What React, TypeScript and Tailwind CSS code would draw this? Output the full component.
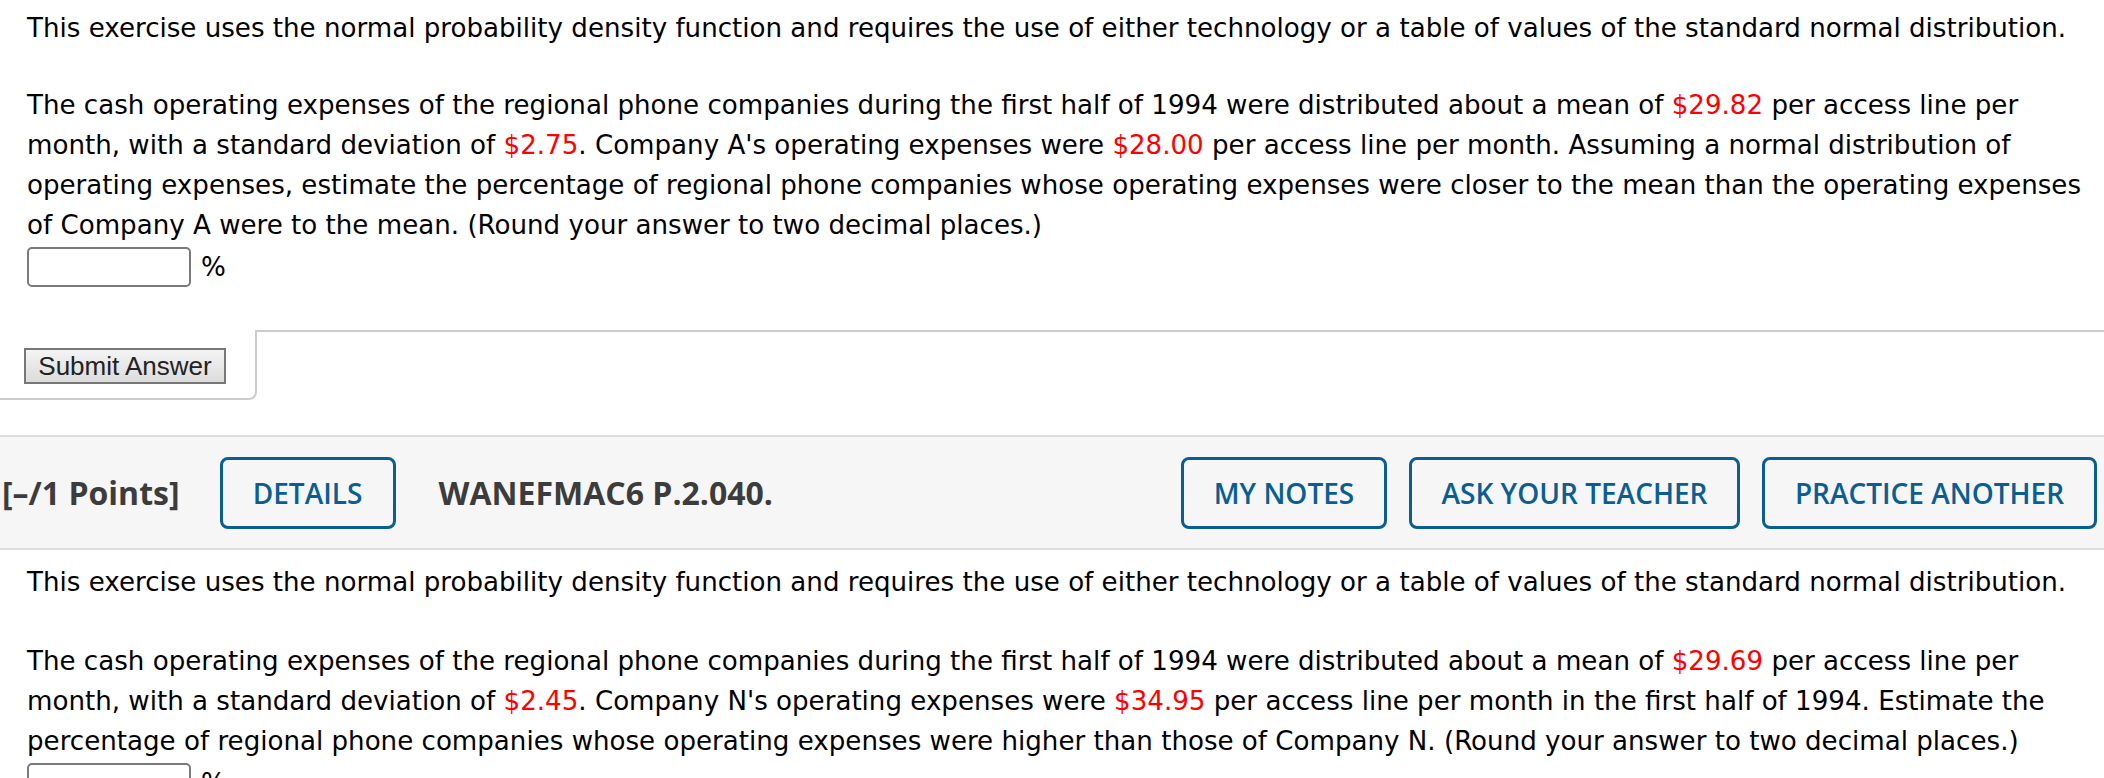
const body = { fontFamily: '"DejaVu Sans", Verdana, sans-serif' }
const head = { fontFamily: '"Open Sans", "Noto Sans", sans-serif' }
const arial = { fontFamily: '"Liberation Sans", Arial, sans-serif' }

function Red({ children }: { children: React.ReactNode }) {
  return <span className="text-[#ff0000]">{children}</span>
}

function AnswerRow() {
  return (
    <div className="mt-[2px] flex items-center gap-[10px]">
      <input
        type="text"
        className="h-[40px] w-[164px] rounded-[5px] border-2 border-[#7a7a7a] bg-white"
      />
      <span>%</span>
    </div>
  )
}

function HeadButton({ label, w }: { label: string; w: string }) {
  return (
    <button
      className={`h-[72px] ${w} rounded-[8px] border-[3px] border-[#0b5e92] text-[28px] font-semibold text-[#0b5e92]`}
      style={head}
    >
      {label}
    </button>
  )
}

export default function App() {
  return (
    <div className="h-[778px] w-[2104px] overflow-hidden bg-white text-[26.12px] leading-[40px] text-black" style={body}>
      <section className="pl-[27px] pr-[20px] pt-[8px]">
        <p>
          This exercise uses the normal probability density function and requires the use of either technology or a
          table of values of the standard normal distribution.
        </p>
        <p className="mt-[37px]">
          The cash operating expenses of the regional phone companies during the first half of 1994 were distributed
          about a mean of <Red>$29.82</Red> per access line per month, with a standard deviation of <Red>$2.75</Red>.
          Company A's operating expenses were <Red>$28.00</Red> per access line per month. Assuming a normal
          distribution of operating expenses, estimate the percentage of regional phone companies whose operating
          expenses were closer to the mean than the operating expenses of Company A were to the mean. (Round your
          answer to two decimal places.)
        </p>
        <AnswerRow />
      </section>

      <div className="mt-[43px] flex">
        <div className="flex h-[70px] w-[257px] items-center rounded-br-[8px] border-r-2 border-b-2 border-[#cccccc] pl-[24px] pt-[4px]">
          <button
            className="h-[36px] w-[202px] border-2 border-[#777777] bg-gradient-to-b from-[#f4f4f4] to-[#dcdcdc] text-[26px] leading-none text-[#222222]"
            style={arial}
          >
            Submit Answer
          </button>
        </div>
        <div className="flex-1 border-t-2 border-[#cccccc]" />
      </div>

      <div className="mt-[35px] flex h-[115px] items-center border-y-2 border-[#dddddd] bg-[#f6f6f6] pr-[7px]" style={head}>
        <span className="pl-[2px] text-[32px] font-bold text-[#3c3c3c]">[–/1 Points]</span>
        <div className="ml-[40px]">
          <HeadButton label="DETAILS" w="w-[176px]" />
        </div>
        <span className="ml-[43px] text-[32px] font-bold text-[#3c3c3c]">WANEFMAC6 P.2.040.</span>
        <div className="ml-auto flex gap-[22px]">
          <HeadButton label="MY NOTES" w="w-[206px]" />
          <HeadButton label="ASK YOUR TEACHER" w="w-[331px]" />
          <HeadButton label="PRACTICE ANOTHER" w="w-[335px]" />
        </div>
      </div>

      <section className="pl-[27px] pr-[20px] pt-[12px]">
        <p>
          This exercise uses the normal probability density function and requires the use of either technology or a
          table of values of the standard normal distribution.
        </p>
        <p className="mt-[39px]">
          The cash operating expenses of the regional phone companies during the first half of 1994 were distributed
          about a mean of <Red>$29.69</Red> per access line per month, with a standard deviation of <Red>$2.45</Red>.
          Company N's operating expenses were <Red>$34.95</Red> per access line per month in the first half of 1994.
          Estimate the percentage of regional phone companies whose operating expenses were higher than those of
          Company N. (Round your answer to two decimal places.)
        </p>
        <AnswerRow />
      </section>
    </div>
  )
}
